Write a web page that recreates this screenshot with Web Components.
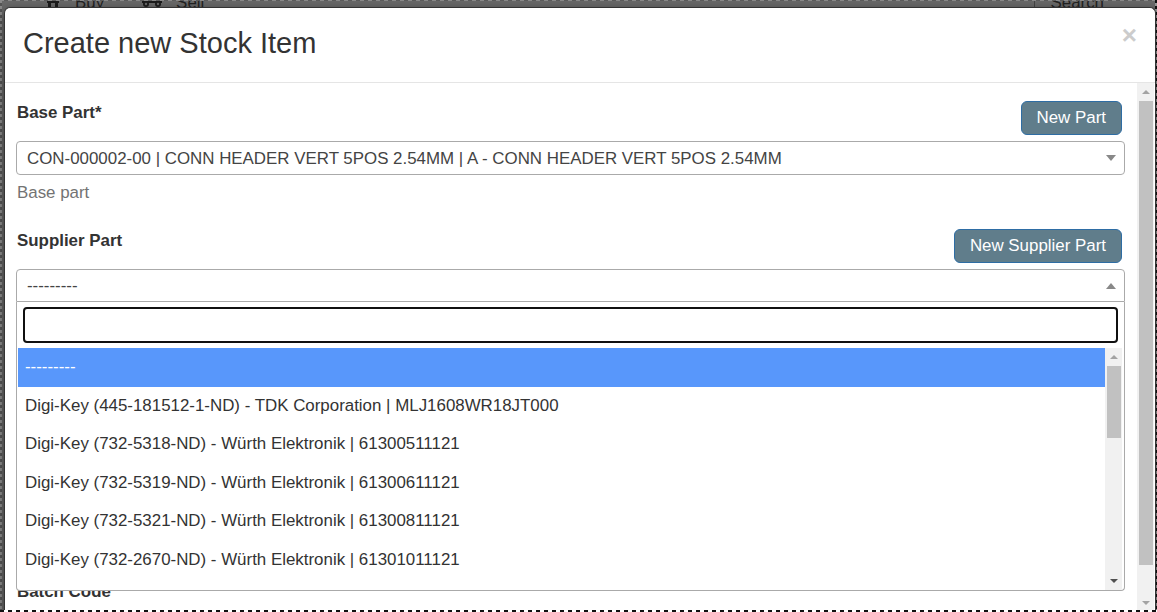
<!DOCTYPE html>
<html>
<head>
<meta charset="utf-8">
<title>Create new Stock Item</title>
<style>
	html, body { margin: 0; height: 100%; overflow: hidden; }
	body { font-family: "Liberation Sans", Arial, sans-serif; font-size: 16.9px; color: #333; }
</style>
</head>
<body>
<stock-page>
	<stock-modal heading="Create new Stock Item">
		<form-field label="Base Part*" action="New Part" help="Base part">
			<select-box value="CON-000002-00 | CONN HEADER VERT 5POS 2.54MM | A - CONN HEADER VERT 5POS 2.54MM"></select-box>
		</form-field>
		<form-field label="Supplier Part" action="New Supplier Part">
			<select-box value="---------" open>
				<select-dropdown>
					<select-option selected>---------</select-option>
					<select-option>Digi-Key (445-181512-1-ND) - TDK Corporation | MLJ1608WR18JT000</select-option>
					<select-option>Digi-Key (732-5318-ND) - Würth Elektronik | 61300511121</select-option>
					<select-option>Digi-Key (732-5319-ND) - Würth Elektronik | 61300611121</select-option>
					<select-option>Digi-Key (732-5321-ND) - Würth Elektronik | 61300811121</select-option>
					<select-option>Digi-Key (732-2670-ND) - Würth Elektronik | 61301011121</select-option>
				</select-dropdown>
			</select-box>
		</form-field>
		<form-field label="Batch Code" class="after-dropdown"></form-field>
	</stock-modal>
</stock-page>

<script>
customElements.define('stock-page', class extends HTMLElement
{
	connectedCallback()
	{
		const shadow = this.attachShadow({ mode: 'open' });

		shadow.innerHTML = `
			<style>
				:host {
					display: flex;
					flex-direction: column;
					position: relative;
					height: 612px;
					overflow: hidden;
					box-sizing: border-box;
					padding: 7px 1px 0 4px;
					background: #686868;
				}

				.nav {
					position: absolute;
					top: -6px;
					left: 0;
					right: 0;
					display: flex;
					align-items: center;
					height: 18px;
					color: #222;
					line-height: 18px;
				}

				.nav svg { display: block; fill: #1c1c1c; }
				.buy { margin-left: 47px; }
				.buy-text { margin-left: 16px; }
				.sell { margin-left: 38px; }
				.sell-text { margin-left: 14px; }
				.search { margin-left: auto; margin-right: 53px; padding-left: 15px; border-left: 1px solid #444; }

				.edge { position: absolute; }
				.edge.left { top: 0; bottom: 0; left: 0; width: 2px; background: repeating-linear-gradient(#8a8a8a 0 3px, #555 3px 6px); }
				.edge.right { top: 0; bottom: 0; right: 0; width: 2px; background: repeating-linear-gradient(#111 0 3px, #999 3px 6px); }
				.edge.top { top: 0; left: 0; right: 0; height: 1px; background: repeating-linear-gradient(90deg, #8a8a8a 0 4px, #5c5c5c 4px 8px); }
				.edge.bottom { bottom: 0; left: 0; right: 0; height: 2px; background: repeating-linear-gradient(90deg, #111 0 4px, #fff 4px 8px); z-index: 2; }

				::slotted(stock-modal) { position: relative; z-index: 1; }
			</style>
			<div class="nav">
				<svg class="buy" width="12" height="7" viewBox="0 0 12 7"><path d="M0 0h12v3H0zM1 3h3v4H1zM8 3h3v4H8z"/></svg>
				<span class="buy-text">Buy</span>
				<svg class="sell" width="20" height="7" viewBox="0 0 20 7"><path d="M0 0h20v3H0z"/><circle cx="4" cy="4" r="3"/><circle cx="16" cy="4" r="3"/><circle cx="4" cy="4" r="1.2" fill="#686868"/><circle cx="16" cy="4" r="1.2" fill="#686868"/></svg>
				<span class="sell-text">Sell</span>
				<span class="search">Search</span>
			</div>
			<i class="edge top"></i>
			<i class="edge left"></i>
			<i class="edge right"></i>
			<i class="edge bottom"></i>
			<slot></slot>
		`;
	}
});

customElements.define('stock-modal', class extends HTMLElement
{
	connectedCallback()
	{
		const shadow = this.attachShadow({ mode: 'open' });

		shadow.innerHTML = `
			<style>
				:host {
					display: flex;
					flex-direction: column;
					flex: 1;
					min-height: 0;
					background: #fff;
					border: 1px solid #333;
					border-bottom: 0;
					border-radius: 6px 6px 0 0;
					box-shadow: 0 3px 9px rgba(0, 0, 0, .5);
				}

				header {
					display: flex;
					justify-content: space-between;
					box-sizing: border-box;
					height: 75px;
					padding: 15px 18px 0 18px;
					border-bottom: 1px solid #e5e5e5;
				}

				h3 {
					margin: 0;
					font-size: 29px;
					font-weight: 500;
					line-height: 41px;
					color: #333;
				}

				.close {
					font-size: 26px;
					font-weight: 700;
					line-height: 24px;
					color: #ccc;
				}

				.body {
					display: flex;
					flex: 1;
					min-height: 0;
				}

				.content {
					flex: 1;
					min-width: 0;
					padding: 18px 12px 0 11px;
				}

				fake-scrollbar { margin-right: 1px; }
			</style>
			<header>
				<h3>${this.getAttribute('heading')}</h3>
				<span class="close">×</span>
			</header>
			<div class="body">
				<div class="content"><slot></slot></div>
				<fake-scrollbar thumb-top="0" thumb-height="464"></fake-scrollbar>
			</div>
		`;
	}
});

customElements.define('form-field', class extends HTMLElement
{
	connectedCallback()
	{
		const shadow = this.attachShadow({ mode: 'open' });
		const action = this.getAttribute('action');
		const help = this.getAttribute('help');
		const after = this.classList.contains('after-dropdown');

		shadow.innerHTML = `
			<style>
				:host {
					display: block;
					margin-bottom: ${help ? 25 : 0}px;
				}

				.top {
					display: flex;
					justify-content: space-between;
					align-items: flex-start;
					margin-bottom: 6px;
					margin-top: ${after ? 278 : 0}px;
				}

				label {
					padding-left: 1px;
					font-weight: 700;
					line-height: 23px;
				}

				button {
					box-sizing: border-box;
					height: 34px;
					margin-right: 3px;
					padding: 0 15px;
					background: #607d8b;
					border: 1px solid #2e6da4;
					border-radius: 6px;
					color: #fff;
					font: 16.9px "Liberation Sans", Arial, sans-serif;
				}

				.help {
					margin-top: 6px;
					padding-left: 1px;
					color: #737373;
					line-height: 23px;
				}
			</style>
			<div class="top">
				<label>${this.getAttribute('label')}</label>
				${action ? `<button type="button">${action}</button>` : ''}
			</div>
			<slot></slot>
			${help ? `<div class="help">${help}</div>` : ''}
		`;
	}
});

customElements.define('select-box', class extends HTMLElement
{
	connectedCallback()
	{
		const shadow = this.attachShadow({ mode: 'open' });
		const open = this.hasAttribute('open');

		shadow.innerHTML = `
			<style>
				:host {
					display: block;
					position: relative;
					height: ${open ? 33 : 34}px;
				}

				.box {
					display: flex;
					align-items: center;
					justify-content: space-between;
					box-sizing: border-box;
					height: 100%;
					padding: 0 8px 0 10px;
					background: #fff;
					border: 1px solid #aaa;
					border-radius: ${open ? '4px 4px 0 0' : '4px'};
					color: #444;
				}

				.box span { padding-top: 1px; }

				.arrow {
					width: 0;
					height: 0;
					border-left: 5px solid transparent;
					border-right: 5px solid transparent;
					${open ? 'border-bottom' : 'border-top'}: 6px solid #888;
				}
			</style>
			<div class="box">
				<span>${this.getAttribute('value')}</span>
				<i class="arrow"></i>
			</div>
			<slot></slot>
		`;
	}
});

customElements.define('select-dropdown', class extends HTMLElement
{
	connectedCallback()
	{
		const shadow = this.attachShadow({ mode: 'open' });

		shadow.innerHTML = `
			<style>
				/* menu over the form, like the select2 one */
				:host {
					display: flex;
					flex-direction: column;
					position: absolute;
					z-index: 3;
					top: 33px;
					left: 0;
					right: 0;
					box-sizing: border-box;
					height: 289px;
					padding: 0 2px 0 1px;
					background: #fff;
					border: 1px solid #aaa;
					border-top: 0;
					border-radius: 0 0 4px 4px;
				}

				.search {
					display: flex;
					padding: 5px 4px 5px 5px;
				}

				input {
					flex: 1;
					min-width: 0;
					box-sizing: border-box;
					height: 36px;
					background: #fff;
					border: 2px solid #101010;
					border-radius: 4px;
				}

				.list {
					display: flex;
					flex: 1;
					min-height: 0;
				}

				.rows {
					flex: 1;
					min-width: 0;
					overflow: hidden;
				}
			</style>
			<div class="search"><input type="text"></div>
			<div class="list">
				<div class="rows"><slot></slot></div>
				<fake-scrollbar thumb-top="0" thumb-height="72" dark-down></fake-scrollbar>
			</div>
		`;
	}
});

customElements.define('select-option', class extends HTMLElement
{
	connectedCallback()
	{
		const shadow = this.attachShadow({ mode: 'open' });

		shadow.innerHTML = `
			<style>
				:host {
					display: flex;
					align-items: center;
					height: 38.5px;
					padding-left: 7px;
					color: #333;
				}

				:host([selected]) {
					background: #5897fb;
					color: #fff;
				}
			</style>
			<slot></slot>
		`;
	}
});

customElements.define('fake-scrollbar', class extends HTMLElement
{
	connectedCallback()
	{
		const shadow = this.attachShadow({ mode: 'open' });
		const downColor = this.hasAttribute('dark-down') ? '#505050' : '#a3a3a3';

		shadow.innerHTML = `
			<style>
				:host {
					display: flex;
					flex-direction: column;
					flex: none;
					width: 17px;
					background: #f1f1f1;
				}

				.btn {
					display: flex;
					flex: none;
					align-items: center;
					justify-content: center;
					height: 18px;
				}

				.btn i {
					width: 0;
					height: 0;
					border-left: 4px solid transparent;
					border-right: 4px solid transparent;
				}

				.up i { border-bottom: 4px solid #a3a3a3; }
				.down i { border-top: 4px solid ${downColor}; }

				.track {
					flex: 1;
					min-height: 0;
					padding: ${this.getAttribute('thumb-top')}px 1px 0 2px;
				}

				.thumb {
					height: ${this.getAttribute('thumb-height')}px;
					background: #c1c1c1;
				}
			</style>
			<div class="btn up"><i></i></div>
			<div class="track"><div class="thumb"></div></div>
			<div class="btn down"><i></i></div>
		`;
	}
});
</script>
</body>
</html>
